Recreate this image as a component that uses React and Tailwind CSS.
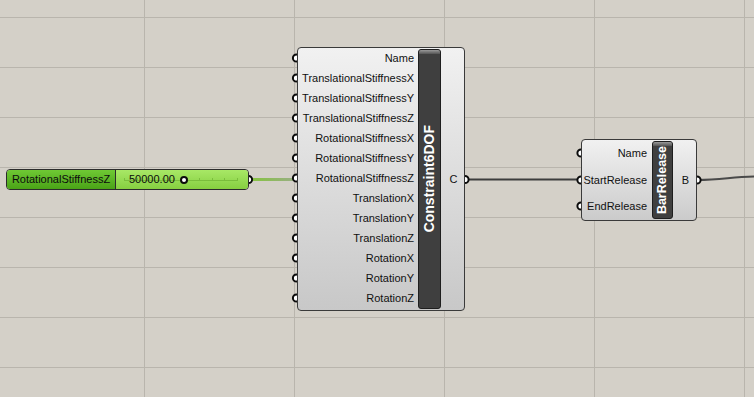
import React from "react";

const font = { fontFamily: '"Liberation Sans", Arial, sans-serif' };

const constraintInputs = [
  "Name",
  "TranslationalStiffnessX",
  "TranslationalStiffnessY",
  "TranslationalStiffnessZ",
  "RotationalStiffnessX",
  "RotationalStiffnessY",
  "RotationalStiffnessZ",
  "TranslationX",
  "TranslationY",
  "TranslationZ",
  "RotationX",
  "RotationY",
  "RotationZ",
];

const releaseInputs = ["Name", "StartRelease", "EndRelease"];

// grip positions on the canvas
const constraintPorts = constraintInputs.map((_, i) => 58 + i * 20);
const releasePorts = [153, 180, 206];

const Grip = ({ x, y }) => (
  <circle cx={x} cy={y} r="3.6" fill="#ffffff" stroke="#0c0c0c" strokeWidth="2" />
);

const Canvas = () => {
  const vLines = [144.5, 294.5, 444.5, 594.5, 744.5];
  const hLines = [17.5, 67.5, 117.5, 167.5, 217.5, 267.5, 317.5, 367.5];
  return (
    <svg className="absolute inset-0" width="754" height="397">
      <defs>
        <linearGradient id="greenWire" gradientUnits="userSpaceOnUse" x1="249" x2="296" y1="0" y2="0">
          <stop offset="0" stopColor="#84c43c" />
          <stop offset="1" stopColor="#9aae86" />
        </linearGradient>
      </defs>
      {vLines.map((x) => (
        <line key={"v" + x} x1={x} x2={x} y1="0" y2="397" stroke="#b9b5ad" strokeWidth="1" />
      ))}
      {hLines.map((y) => (
        <line key={"h" + y} x1="0" x2="754" y1={y} y2={y} stroke="#b9b5ad" strokeWidth="1" />
      ))}

      {/* wires */}
      <path d="M249 179.5 L296 179.5" stroke="url(#greenWire)" strokeWidth="3" fill="none" />
      <path d="M465 179.5 L581 179.5" stroke="#3d3d3d" strokeWidth="2.2" fill="none" />
      <path d="M697 180 C 722 180, 730 177, 754 176.5" stroke="#4a4a4a" strokeWidth="2" fill="none" />

      {/* grips */}
      {constraintPorts.map((y) => (
        <Grip key={"c" + y} x={296.5} y={y} />
      ))}
      <Grip x={465} y={179.5} />
      {releasePorts.map((y) => (
        <Grip key={"r" + y} x={581} y={y} />
      ))}
      <Grip x={697} y={180} />
      <Grip x={248.5} y={179.5} />
    </svg>
  );
};

const DarkBar = ({ title, size }) => (
  <div className="relative my-[1px] flex items-center justify-center overflow-hidden rounded-[3px] border border-[#1e1e1e] bg-[#3f3f3f]">
    <div className="absolute left-0 right-0 top-0 h-[4px] bg-gradient-to-b from-[#9a9a9a] to-[#555555]" />
    <span
      className={`rotate-180 font-bold text-white [writing-mode:vertical-rl] ${size}`}
      style={font}
    >
      {title}
    </span>
  </div>
);

const Slider = () => (
  <div
    className="absolute left-[6px] top-[169px] flex h-[21px] w-[243px] overflow-hidden rounded-[4px] border border-[#2c2c2c] text-[11px] text-[#0c0c0c]"
    style={font}
  >
    <div className="flex w-[109px] items-center justify-center border-r border-[#2c2c2c] bg-gradient-to-b from-[#6fc934] to-[#4aa316]">
      RotationalStiffnessZ
    </div>
    <div className="relative flex flex-1 items-center bg-gradient-to-b from-[#a8e866] to-[#86cf40] pl-[13px]">
      <div className="absolute left-[8px] right-[10px] top-[8px] h-[3px] border-b border-[#6fb233] opacity-70">
        <div className="flex h-full justify-between">
          {Array.from({ length: 10 }).map((_, i) => (
            <span key={i} className="h-full w-px bg-[#6fb233]" />
          ))}
        </div>
      </div>
      <span className="relative">50000.00</span>
      <span className="relative ml-[5px] mt-[1px] h-[8px] w-[8px] rounded-full border-2 border-[#0c0c0c] bg-white" />
    </div>
  </div>
);

const Constraint6DOF = () => (
  <div
    className="absolute left-[297px] top-[47px] flex h-[264px] w-[168px] rounded-[4px] border border-[#3a3a3a] bg-gradient-to-b from-[#f1f1f1] to-[#c8c8c8] text-[11px] text-[#111111]"
    style={font}
  >
    <div className="flex w-[120px] flex-col items-end pr-[4px]">
      {constraintInputs.map((name) => (
        <div key={name} className="h-[20px] leading-[20px] whitespace-nowrap">
          {name}
        </div>
      ))}
    </div>
    <div className="flex w-[25px]">
      <DarkBar title="Constraint6DOF" size="text-[14px]" />
    </div>
    <div className="flex flex-1 items-center justify-center">C</div>
  </div>
);

const BarRelease = () => (
  <div
    className="absolute left-[581px] top-[139px] flex h-[82px] w-[116px] rounded-[4px] border border-[#3a3a3a] bg-gradient-to-b from-[#f1f1f1] to-[#cbcbcb] text-[11px] text-[#111111]"
    style={font}
  >
    <div className="flex w-[70px] flex-col items-end pr-[5px]">
      {releaseInputs.map((name) => (
        <div key={name} className="flex flex-1 items-center whitespace-nowrap">
          {name}
        </div>
      ))}
    </div>
    <div className="flex w-[23px]">
      <DarkBar title="BarRelease" size="text-[12.5px]" />
    </div>
    <div className="flex flex-1 items-center justify-center">B</div>
  </div>
);

export default function App() {
  return (
    <div className="relative h-[397px] w-[754px] overflow-hidden bg-[#d4d0c8]">
      <Canvas />
      <Slider />
      <Constraint6DOF />
      <BarRelease />
    </div>
  );
}
